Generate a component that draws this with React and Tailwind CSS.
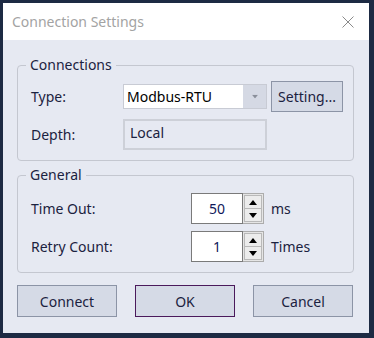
import React from 'react';

const font = { fontFamily: '"Noto Sans", "Open Sans", sans-serif' };

const Triangle = ({ up, className = '' }) => (
  <svg width="8" height="5" viewBox="0 0 8 5" className={className}>
    {up ? <path d="M0 5 L4 0 L8 5 Z" fill="currentColor" /> : <path d="M0 0 L8 0 L4 5 Z" fill="currentColor" />}
  </svg>
);

const SpinBox = ({ value }) => (
  <div className="flex h-[31px] w-[73px]">
    <div className="flex w-[52px] items-center justify-center border border-[#7a7a7a] bg-white text-[14px] text-[#10185a]">
      {value}
    </div>
    <div className="flex w-[21px] flex-col border border-l-0 border-[#acacac] bg-[#e5e5e5] p-[1px]">
      <div className="flex flex-1 items-center justify-center border border-[#b9b9b9] bg-[#ececec] text-black">
        <Triangle up />
      </div>
      <div className="flex flex-1 items-center justify-center border border-t-0 border-[#b9b9b9] bg-[#ececec] text-black">
        <Triangle />
      </div>
    </div>
  </div>
);

const Group = ({ title, className = '', children }) => (
  <fieldset className={`rounded-[4px] border border-[#c4c7d0] pl-[13px] ${className}`}>
    <legend className="ml-[-5px] px-[4px] text-[14px] leading-[20px]">{title}</legend>
    {children}
  </fieldset>
);

const Button = ({ children, primary }) => (
  <button
    className={`h-[32px] w-[100px] border bg-[#d5dae6] text-[14px] text-[#1b2240] ${
      primary ? 'border-[#4b1a5c]' : 'border-[#8c94a6]'
    }`}
  >
    {children}
  </button>
);

export default function App() {
  return (
    <div style={font} className="flex h-[338px] w-[374px] flex-col bg-[#1d2a43] pb-[5px] pl-[3px] pr-[5px] pt-[3px] text-[#1b2240]">
      {/* Title bar */}
      <div className="flex h-[37px] items-center justify-between bg-white pl-[9px] pr-[15px]">
        <span className="text-[14px] text-[#a3a3a3]">Connection Settings</span>
        <svg width="12" height="12" viewBox="0 0 12 12">
          <path d="M0.5 0.5 L11.5 11.5 M11.5 0.5 L0.5 11.5" stroke="#8a8a8a" strokeWidth="1" />
        </svg>
      </div>

      {/* Body */}
      <div className="flex flex-1 flex-col bg-[#e6e9f2] pl-[14px] pr-[15px] pt-[15px]">
        <Group title="Connections" className="pb-[10px] pt-[6px]">
          <div className="flex h-[31px] items-center">
            <span className="w-[92px] text-[14px]">Type:</span>
            <div className="flex h-[25px] w-[144px] border border-[#c8cbd4] bg-white">
              <span className="flex-1 pl-[3px] text-[14px] leading-[23px] text-black">Modbus-RTU</span>
              <div className="flex w-[23px] items-center justify-center bg-[#d5d9e4] text-[#8a8f9a]">
                <Triangle className="scale-75" />
              </div>
            </div>
            <button className="ml-[4px] h-[31px] w-[72px] border border-[#8c94a6] bg-[#d5dae6] text-[14px] text-[#1b2240]">
              Setting...
            </button>
          </div>
          <div className="mt-[7px] flex h-[31px] items-center">
            <span className="w-[92px] text-[14px]">Depth:</span>
            <div className="h-[31px] w-[144px] border-2 border-[#cdd0d8] pl-[5px] pt-[2px] text-[14px] leading-[20px]">Local</div>
          </div>
        </Group>

        <Group title="General" className="mt-[4px] pb-[10px] pt-[8px]">
          <div className="flex h-[31px] items-center">
            <span className="w-[160px] text-[14px]">Time Out:</span>
            <SpinBox value="50" />
            <span className="ml-[7px] text-[14px]">ms</span>
          </div>
          <div className="mt-[7px] flex h-[31px] items-center">
            <span className="w-[160px] text-[14px]">Retry Count:</span>
            <SpinBox value="1" />
            <span className="ml-[7px] text-[14px]">Times</span>
          </div>
        </Group>

        <div className="mt-[12px] flex gap-[18px]">
          <Button>Connect</Button>
          <Button primary>OK</Button>
          <Button>Cancel</Button>
        </div>
      </div>
    </div>
  );
}
